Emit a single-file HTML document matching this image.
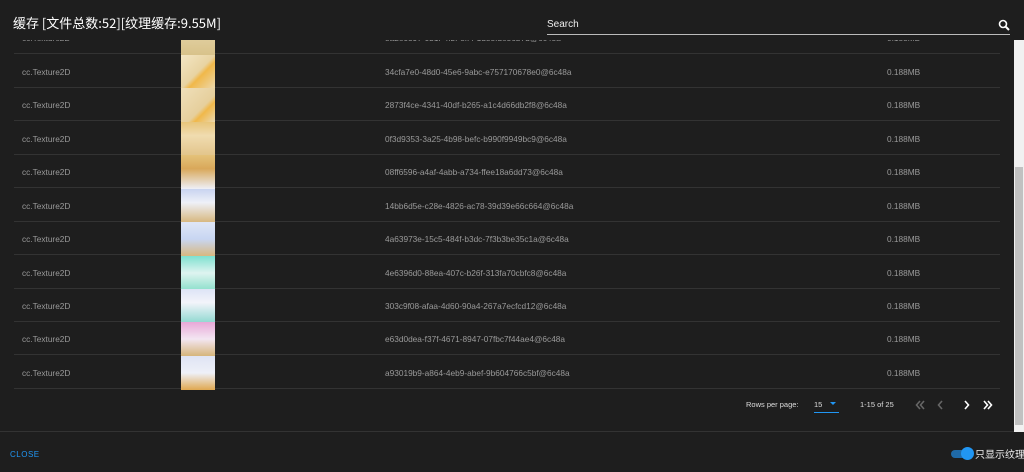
<!DOCTYPE html>
<html><head><meta charset="utf-8"><style>
*{margin:0;padding:0;box-sizing:border-box}
body{width:1024px;height:472px;background:#1e1e1e;font-family:"Liberation Sans","Noto Sans CJK SC",sans-serif;color:#9a9a9a;overflow:hidden;position:relative}
.hdr{position:absolute;left:0;top:0;width:1024px;height:40px;background:#1e1e1e;z-index:3}
.title{position:absolute;left:13px;top:13px;font-size:13px;color:#fff;font-family:"Noto Sans CJK SC","Liberation Sans",sans-serif}
.search{position:absolute;left:547px;top:19px;width:463px;height:16px;border-bottom:1px solid #bbb;font-size:10px;color:#eee}
.row{position:absolute;left:14px;width:986px;height:33px;border-bottom:1px solid #333;font-size:8.3px}
.row span{position:absolute;top:12px;left:8px}
.thumb{position:absolute;left:167px;top:0;width:34px;height:34px}
.sb{position:absolute;left:1014px;top:40px;width:10px;height:392px;background:#f1f1f1}
.th{position:absolute;left:1px;top:127px;width:8px;height:258px;background:#c1c1c1}
.foot{position:absolute;left:0;top:431px;width:1014px;border-top:1px solid #333}
</style></head><body>
<div class="hdr"><div class="title">缓存 [文件总数:52][纹理缓存:9.55M]</div>
<div class="search">Search
<svg style="position:absolute;right:0;top:0" width="12" height="12" viewBox="0 0 12 12"><circle cx="5" cy="5" r="3.5" stroke="#fff" stroke-width="1.6" fill="none"/><path d="M7.5 7.5L11 11" stroke="#fff" stroke-width="2"/></svg></div></div>
<div class="row" style="top:21px;height:33px"><span>cc.Texture2D</span><div class="thumb" style="background:linear-gradient(#e8d9b0,#d8c28a)"></div><span style="left:371px">8a2e0597-0b1f-4fbf-8ff4-1d88fde56b7d@6c48a</span><span style="left:873px">0.188MB</span></div>
<div class="row" style="top:55px"><span>cc.Texture2D</span><div class="thumb" style="background:linear-gradient(135deg,#f3e6c4,#e8d3a2 50%,#f0b84a 60%,#ecd9ae)"></div><span style="left:371px">34cfa7e0-48d0-45e6-9abc-e757170678e0@6c48a</span><span style="left:873px">0.188MB</span></div>
<div class="row" style="top:88px"><span>cc.Texture2D</span><div class="thumb" style="background:linear-gradient(135deg,#efdfba,#e6cf9c 60%,#f0b84a 70%,#ead8b0)"></div><span style="left:371px">2873f4ce-4341-40df-b265-a1c4d66db2f8@6c48a</span><span style="left:873px">0.188MB</span></div>
<div class="row" style="top:122px"><span>cc.Texture2D</span><div class="thumb" style="background:linear-gradient(#e8c57a,#f0dcb0 40%,#e2c48a)"></div><span style="left:371px">0f3d9353-3a25-4b98-befc-b990f9949bc9@6c48a</span><span style="left:873px">0.188MB</span></div>
<div class="row" style="top:155px"><span>cc.Texture2D</span><div class="thumb" style="background:linear-gradient(#e4c27a,#d9a85a 40%,#eef0f8)"></div><span style="left:371px">08ff6596-a4af-4abb-a734-ffee18a6dd73@6c48a</span><span style="left:873px">0.188MB</span></div>
<div class="row" style="top:189px"><span>cc.Texture2D</span><div class="thumb" style="background:linear-gradient(#c9d4f0,#eef0f8 40%,#d6b57a)"></div><span style="left:371px">14bb6d5e-c28e-4826-ac78-39d39e66c664@6c48a</span><span style="left:873px">0.188MB</span></div>
<div class="row" style="top:222px"><span>cc.Texture2D</span><div class="thumb" style="background:linear-gradient(#dfe6f6,#c8d6f2 50%,#d8b880)"></div><span style="left:371px">4a63973e-15c5-484f-b3dc-7f3b3be35c1a@6c48a</span><span style="left:873px">0.188MB</span></div>
<div class="row" style="top:256px"><span>cc.Texture2D</span><div class="thumb" style="background:linear-gradient(#7ee0d0,#dff4f0 50%,#8fe0cc)"></div><span style="left:371px">4e6396d0-88ea-407c-b26f-313fa70cbfc8@6c48a</span><span style="left:873px">0.188MB</span></div>
<div class="row" style="top:289px"><span>cc.Texture2D</span><div class="thumb" style="background:linear-gradient(#dde4f6,#f3f4fa 40%,#8fd8d0)"></div><span style="left:371px">303c9f08-afaa-4d60-90a4-267a7ecfcd12@6c48a</span><span style="left:873px">0.188MB</span></div>
<div class="row" style="top:322px"><span>cc.Texture2D</span><div class="thumb" style="background:linear-gradient(#e8a8d8,#f3e6f2 50%,#d6b57a)"></div><span style="left:371px">e63d0dea-f37f-4671-8947-07fbc7f44ae4@6c48a</span><span style="left:873px">0.188MB</span></div>
<div class="row" style="top:356px"><span>cc.Texture2D</span><div class="thumb" style="background:linear-gradient(#dfe4f4,#eef0f8 50%,#e0a850)"></div><span style="left:371px">a93019b9-a864-4eb9-abef-9b604766c5bf@6c48a</span><span style="left:873px">0.188MB</span></div>
<div style="position:absolute;top:400px;left:746px;font-size:7.5px;color:#ddd">Rows per page:</div>
<div style="position:absolute;top:400px;left:814px;font-size:7.5px;color:#ddd;width:25px;height:13px;border-bottom:1px solid #2196f3">15<span style="position:absolute;left:16px;top:2px;border:3px solid transparent;border-top:3px solid #2196f3"></span></div>
<div style="position:absolute;top:400px;left:860px;font-size:7.5px;color:#ddd">1-15 of 25</div>
<svg style="position:absolute;left:914px;top:399px" width="80" height="12" viewBox="0 0 80 12"><g fill="none" stroke-width="1.6"><path d="M6 2L2.5 6L6 10M10 2L6.5 6L10 10" stroke="#666"/><path d="M28 2L24.5 6L28 10" stroke="#666"/><path d="M51 2L54.5 6L51 10" stroke="#fff"/><path d="M70 2L73.5 6L70 10M74 2L77.5 6L74 10" stroke="#fff"/></g></svg>
<div class="foot"></div>
<div style="position:absolute;left:10px;top:450px;font-size:8px;color:#2196f3;letter-spacing:.5px">CLOSE</div>
<div style="position:absolute;left:951px;top:450px;width:20px;height:8px;border-radius:4px;background:#1f6aa8"></div>
<div style="position:absolute;left:961px;top:447px;width:13px;height:13px;border-radius:50%;background:#2196f3"></div>
<div style="position:absolute;left:975px;top:446px;font-size:10px;color:#eee;white-space:nowrap;font-family:'Noto Sans CJK SC',sans-serif">只显示纹理</div>
<div class="sb"><div class="th"></div></div>
</body></html>
